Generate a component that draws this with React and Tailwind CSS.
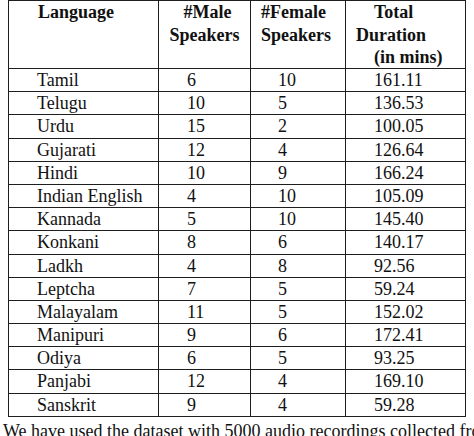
const rows = [
  ["Tamil", "6", "10", "161.11"],
  ["Telugu", "10", "5", "136.53"],
  ["Urdu", "15", "2", "100.05"],
  ["Gujarati", "12", "4", "126.64"],
  ["Hindi", "10", "9", "166.24"],
  ["Indian English", "4", "10", "105.09"],
  ["Kannada", "5", "10", "145.40"],
  ["Konkani", "8", "6", "140.17"],
  ["Ladkh", "4", "8", "92.56"],
  ["Leptcha", "7", "5", "59.24"],
  ["Malayalam", "11", "5", "152.02"],
  ["Manipuri", "9", "6", "172.41"],
  ["Odiya", "6", "5", "93.25"],
  ["Panjabi", "12", "4", "169.10"],
  ["Sanskrit", "9", "4", "59.28"],
];

const cell = "border-r border-b border-[#1e1e1e] h-[23.2px] leading-[23px]";

export default function App() {
  return (
    <div className="w-[474px] h-[436px] overflow-hidden bg-white text-[#111] text-[18px] font-['Liberation_Serif','Times_New_Roman',serif]">
      <div className="ml-[8px] w-[458px] grid grid-cols-[150px_92px_95px_120px] border-l border-t border-[#1e1e1e]">
        {/* header */}
        <div className="border-r border-b border-[#1e1e1e] h-[68px] pl-[29px] font-bold leading-[22.5px]">
          Language
        </div>
        <div className="border-r border-b border-[#1e1e1e] h-[68px] text-center font-bold leading-[22.5px]">
          <div className="pl-[6px]">#Male</div>
          <div>Speakers</div>
        </div>
        <div className="border-r border-b border-[#1e1e1e] h-[68px] pl-[10px] font-bold leading-[22.5px]">
          <div>#Female</div>
          <div>Speakers</div>
        </div>
        <div className="border-r border-b border-[#1e1e1e] h-[68px] pl-[10px] font-bold leading-[22.5px]">
          <div className="pl-[18px]">Total</div>
          <div>Duration</div>
          <div className="pl-[18px]">(in mins)</div>
        </div>

        {rows.map((r) => (
          <div key={r[0]} className="contents">
            <div className={`${cell} pl-[28px]`}>{r[0]}</div>
            <div className={`${cell} pl-[28px]`}>{r[1]}</div>
            <div className={`${cell} pl-[27px]`}>{r[2]}</div>
            <div className={`${cell} pl-[28px]`}>{r[3]}</div>
          </div>
        ))}
      </div>
      <p className="pl-[3px] pt-[3px] leading-[22px] whitespace-nowrap">
        We have used the dataset with 5000 audio recordings collected from
      </p>
    </div>
  );
}
